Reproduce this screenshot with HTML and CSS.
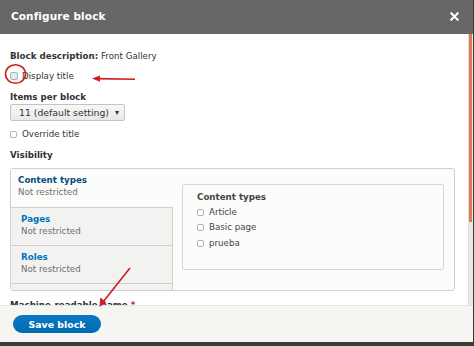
FILE: index.html
```html
<!doctype html>
<html lang="en">
  <head>
    <meta charset="UTF-8" />
    <meta name="viewport" content="width=device-width, initial-scale=1.0" />
    <title>Configure block</title>
    <link rel="stylesheet" href="styles.css">
  </head>
  <body>
    <div class="dialog">
      <div class="titlebar">
        <span class="title">Configure block</span>
        <svg class="close" viewBox="0 0 10 10">
          <path d="M1.5 1.5L8.5 8.5M8.5 1.5L1.5 8.5" stroke="currentColor" stroke-width="2.3" stroke-linecap="square" />
        </svg>
      </div>

      <div class="main">
        <div class="content">
          <div class="row desc"><b>Block description:</b> Front Gallery</div>

          <label class="row check first">
            <span class="box box-focus"></span>
            <span>Display title</span>
          </label>

          <div class="row label">Items per block</div>
          <div class="select">
            <span>11 (default setting)</span>
            <span class="caret">&#9662;</span>
          </div>

          <label class="row check override">
            <span class="box"></span>
            <span>Override title</span>
          </label>

          <div class="row label visibility">Visibility</div>

          <div class="vtabs">
            <div class="tab-list">
              <div class="tab selected">
                <div class="tab-title">Content types</div>
                <div class="tab-summary">Not restricted</div>
              </div>
              <div class="tab">
                <div class="tab-title">Pages</div>
                <div class="tab-summary">Not restricted</div>
              </div>
              <div class="tab">
                <div class="tab-title">Roles</div>
                <div class="tab-summary">Not restricted</div>
              </div>
              <div class="tab-filler"></div>
            </div>
            <div class="tab-pane">
              <div class="fieldset">
                <div class="legend">Content types</div>
                <label class="check pane-check"><span class="box"></span><span>Article</span></label>
                <label class="check pane-check"><span class="box"></span><span>Basic page</span></label>
                <label class="check pane-check"><span class="box"></span><span>prueba</span></label>
              </div>
            </div>
          </div>

          <div class="row label machine">Machine-readable name <span class="req">*</span></div>
        </div>
        <div class="scrollbar"><div class="thumb"></div></div>
      </div>

      <div class="footer">
        <button class="save">Save block</button>
      </div>
    </div>

    <!-- hand-drawn annotations over the screenshot -->
    <svg class="marks" viewBox="0 0 474 346">
      <ellipse cx="15.5" cy="74" rx="10" ry="9.3" fill="none" stroke="#cc1f1f" stroke-width="1.6" />
      <path d="M135 79.3L97 78.6" stroke="#cc1f1f" stroke-width="1.6" fill="none" />
      <path d="M92 78.5L100 75.4L100 81.8Z" fill="#cc1f1f" />
      <path d="M130 268L103 302" stroke="#cc1f1f" stroke-width="1.6" fill="none" />
      <path d="M99.5 307L100.3 297.6L106.2 302.3Z" fill="#cc1f1f" />
    </svg>
  </body>
</html>
```

FILE: styles.css
```css
* {
  margin: 0;
  padding: 0;
  box-sizing: border-box;
}

html,
body {
  width: 474px;
  height: 346px;
  overflow: hidden;
  background: #3b3b3b;
  font-family: 'DejaVu Sans', 'Liberation Sans', sans-serif;
  font-size: 8.7px;
  color: #333;
}

.dialog {
  width: 473px;
  height: 342px;
  display: flex;
  flex-direction: column;
  background: #fff;
}

.titlebar {
  height: 34px;
  background: #676767;
  color: #fff;
  display: flex;
  align-items: center;
  justify-content: space-between;
  padding: 0 14px 2px 11px;
}

.title {
  font-size: 10.5px;
  font-weight: 700;
  letter-spacing: 0.1px;
}

.close {
  width: 9px;
  height: 9px;
  margin-top: 1px;
}

.main {
  height: 271px;
  display: flex;
}

.content {
  flex: 1;
  overflow: hidden;
  padding: 16px 13px 0 10px;
  background: #fff;
}

.scrollbar {
  width: 5px;
  background: #e9e9e9;
  border-left: 1px solid #ddd;
}

.thumb {
  width: 3px;
  height: 188px;
  background: #e2784f;
}

.row {
  line-height: 12px;
  height: 12px;
}

.label,
.desc b {
  font-weight: 700;
}

.check {
  display: flex;
  align-items: center;
  gap: 5px;
}

.box {
  width: 7px;
  height: 7px;
  border: 1px solid #b5b5b5;
  border-radius: 2px;
  background: #fff;
  flex: none;
}

.box-focus {
  width: 8px;
  height: 8px;
  background: #e6eaee;
  border-color: #a9b0b8;
}

.first {
  margin-top: 8px;
}

.first .box {
  margin-right: -1px;
}

.desc + .first + .label {
  margin-top: 9px;
}

.select {
  margin-top: 1px;
  width: 115px;
  height: 17px;
  border: 1px solid #c3c3c3;
  border-radius: 2px;
  background: linear-gradient(#f8f8f6, #e8e8e5);
  display: flex;
  align-items: center;
  justify-content: space-between;
  padding: 0 5px 0 8px;
  font-size: 9.3px;
}

.caret {
  font-size: 8px;
}

.override {
  margin-top: 7px;
}

.visibility {
  margin-top: 9px;
}

.vtabs {
  margin-top: 7px;
  height: 123px;
  border: 1px solid #d0d0cc;
  border-radius: 3px;
  background: #fcfcfa;
  display: flex;
}

.tab-list {
  width: 162px;
  display: flex;
  flex-direction: column;
}

.tab {
  height: 38px;
  padding: 5px 0 0 10px;
  background: #f2f2f0;
  border-top: 1px solid #cfcfcb;
  border-right: 1px solid #cfcfcb;
  line-height: 12px;
}

.tab.selected {
  height: 38px;
  padding-left: 7px;
  background: #fcfcfa;
  border: 0;
  margin-right: -1px;
}

.tab-title {
  font-weight: 700;
  color: #0074bd;
}

.selected .tab-title {
  color: #004f80;
}

.tab-summary {
  color: #6e6e6e;
}

.tab-filler {
  flex: 1;
  background: #f2f2f0;
  border-top: 1px solid #cfcfcb;
  border-right: 1px solid #cfcfcb;
}

.tab-pane {
  flex: 1;
  padding: 15px 10px 0 9px;
}

.fieldset {
  height: 86px;
  border: 1px solid #d6d6d2;
  border-radius: 2px;
  background: #fcfcfa;
  padding: 6px 0 0 14px;
}

.legend {
  font-weight: 700;
  line-height: 13px;
  color: #444;
}

.pane-check {
  height: 15.3px;
  line-height: 15px;
  color: #444;
}

.pane-check:first-of-type {
  margin-top: 1px;
}

.machine {
  margin-top: 8px;
}

.req {
  color: #d6262b;
}

.footer {
  flex: 1;
  background: #f5f5f2;
  border-top: 1px solid #e4e4e0;
  padding: 9px 0 0 13px;
}

.save {
  width: 88px;
  height: 18px;
  border: 0;
  border-radius: 9px;
  background: linear-gradient(#0a79c2, #006cb0);
  color: #fff;
  font-family: inherit;
  font-size: 9.4px;
  font-weight: 700;
}

.marks {
  position: absolute;
  left: 0;
  top: 0;
  width: 474px;
  height: 346px;
  pointer-events: none;
}
```
